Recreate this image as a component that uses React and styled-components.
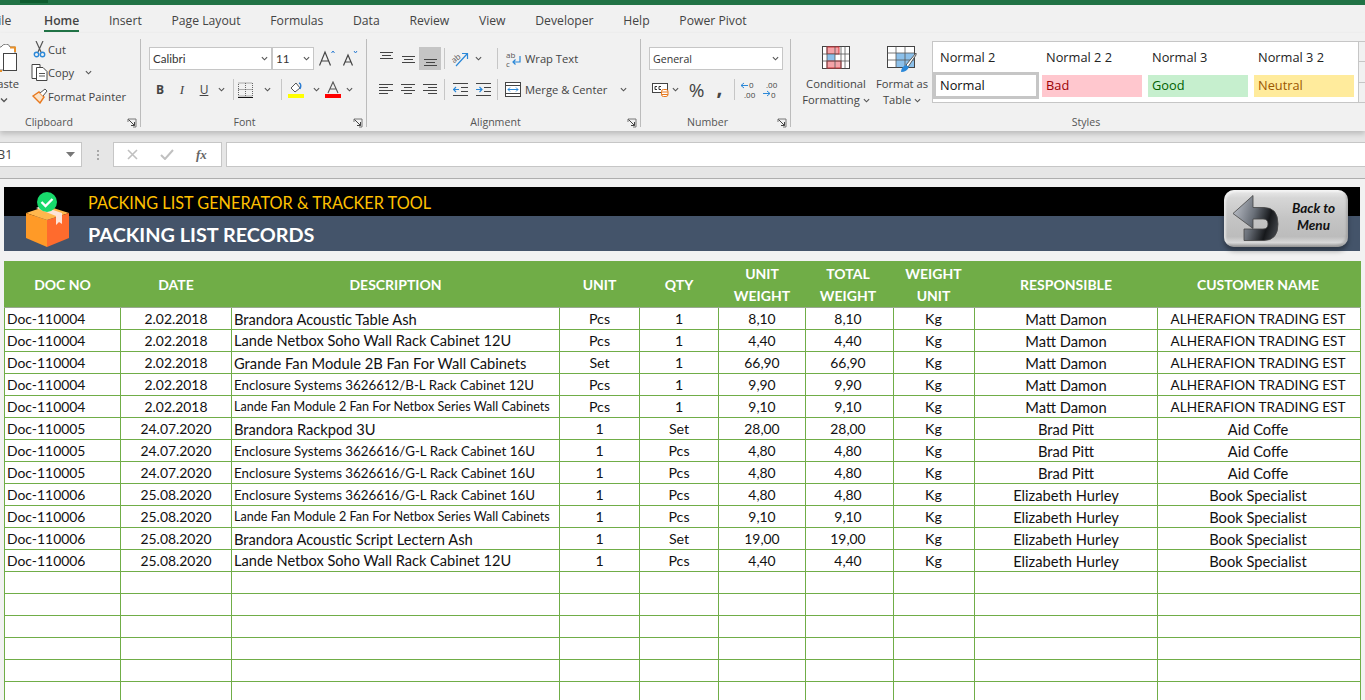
import React from 'react'
import styled, { createGlobalStyle } from 'styled-components'

const CALIBRI = `Lato, "Open Sans", sans-serif`
const SEGOE = `"Open Sans", "Noto Sans", sans-serif`

const GlobalStyle = createGlobalStyle`
  html, body { margin: 0; padding: 0; background: #f2f2f2; }
  #root { width: 1365px; height: 700px; overflow: hidden; }
  * { box-sizing: border-box; }
`

const Page = styled.div`
  width: 1365px;
  height: 700px;
  overflow: hidden;
  background: #f2f2f2;
  font-family: ${SEGOE};
  color: #444;
`

const TitleBar = styled.div`
  height: 5px;
  background: #217346;
  position: relative;
`

const TitleTab = styled.div`
  position: absolute;
  left: 20px;
  top: 0;
  width: 28px;
  height: 3px;
  background: #0e5c2f;
`

const TabRow = styled.div`
  height: 28px;
  background: #f1f1f1;
  display: flex;
  gap: 29.7px;
  margin-left: -8px;
  align-items: flex-start;
  font-size: 12.2px;
  padding-top: 7px;
`

const Tab = styled.div`
  color: #444;
  font-weight: ${p => (p.$active ? 600 : 400)};
  height: 20px;
  line-height: 17px;
  white-space: nowrap;
  margin-left: ${p => (p.$active ? 3 : 0)}px;
  border-bottom: ${p => (p.$active ? '2px solid #217346' : '0')};
`

const Ribbon = styled.div`
  height: 98px;
  background: #f1f1f1;
  display: flex;
  box-shadow: 0 3px 5px rgba(0,0,0,0.18);
  position: relative;
  overflow: hidden;
`

const Group = styled.div`
  width: ${p => p.$w}px;
  flex: ${p => (p.$grow ? 1 : 'none')};
  height: 88px;
  margin-top: 6px;
  padding: 0 0 0 ${p => p.$pad || 0}px;
  position: relative;
  display: flex;
  flex-direction: column;
  border-right: ${p => (p.$grow ? '0' : '1.5px solid #bcbcbc')};
`

const GroupBody = styled.div`
  flex: 1;
  display: flex;
  flex-direction: column;
  min-height: 0;
`

const GroupLabel = styled.div`
  height: 19px;
  line-height: 28px;
  font-size: 10.6px;
  text-align: center;
  color: #555;
  padding-right: ${p => p.$shift || 0}px;
  padding-left: ${p => p.$lead || 0}px;
`

const Launcher = styled.svg`
  position: absolute;
  right: 3px;
  bottom: -1px;
  width: 10px;
  height: 10px;
`

const Row = styled.div`
  display: flex;
  align-items: center;
  height: ${p => p.$h || 23}px;
  margin-top: ${p => p.$mt || 0}px;
  gap: ${p => p.$gap || 0}px;
`

const ClipColumn = styled.div`
  display: flex;
  height: 100%;
`

const PasteButton = styled.div`
  width: 21px;
  margin-right: 10px;
  flex: none;
  display: flex;
  flex-direction: column;
  align-items: flex-end;
  padding-top: 5px;
  font-size: 11.2px;
`

const PasteText = styled.span`
  display: block;
  line-height: 14px;
  margin-top: 5px;
  padding-right: 2px;
`

const PasteArrow = styled.span`
  display: flex;
  margin: 5px 13px 0 0;
`

const ClipList = styled.div`
  display: flex;
  flex-direction: column;
  margin-top: -1px;
`

const ClipItem = styled.div`
  height: 24px;
  display: flex;
  align-items: center;
  font-size: 11.2px;
  white-space: nowrap;
  color: #444;
`

const IconSlot = styled.span`
  width: ${p => p.$w}px;
  flex: none;
  display: flex;
  align-items: center;
  justify-content: center;
  height: 100%;
  background: ${p => (p.$active ? '#c5c5c5' : 'transparent')};
  font-family: ${p => (p.$serif ? '"Liberation Serif", serif' : SEGOE)};
`

const Select = styled.div`
  width: ${p => p.$w}px;
  height: 23px;
  background: #fff;
  border: 1px solid #c6c6c6;
  display: flex;
  align-items: center;
  justify-content: space-between;
  padding: 0 3px;
  font-family: ${p => (p.$calibri ? CALIBRI : SEGOE)};
  font-size: ${p => (p.$calibri ? 11.6 : 10.6)}px;
  color: #333;
`

const Divider = styled.span`
  width: 1px;
  height: 21px;
  flex: none;
  background: #c6c6c6;
  margin: 0 ${p => p.$r || 0}px 0 ${p => p.$l || 0}px;
`

const TextLabel = styled.span`
  font-size: 11.2px;
  color: #444;
  white-space: nowrap;
  margin-left: ${p => p.$ml || 0}px;
`

const BigButton = styled.div`
  width: ${p => p.$w}px;
  margin-left: ${p => p.$ml || 0}px;
  flex: none;
  display: flex;
  flex-direction: column;
  align-items: center;
  font-size: 11.2px;
  line-height: 16px;
  text-align: center;
  padding-top: 7px;
  color: #444;
`

const BigLabel = styled.div`
  margin-top: ${p => p.$mt}px;
  white-space: nowrap;
`

const StylesBody = styled.div`
  flex: 1;
  display: flex;
  align-items: flex-start;
  min-height: 0;
`

const Gallery = styled.div`
  width: 427px;
  height: 62px;
  margin: 2px 0 0 3px;
  background: #fff;
  border: 1px solid #c6c6c6;
  display: grid;
  grid-template-columns: repeat(4, 106px);
  grid-template-rows: 30px 31px;
`

const StyleName = styled.div`
  font-size: 12.8px;
  line-height: 30px;
  padding-left: 7px;
  color: #222;
  white-space: nowrap;
`

const StyleChip = styled.div`
  align-self: center;
  height: ${p => (p.$selected ? 27 : 22)}px;
  width: ${p => (p.$selected ? 106 : 100)}px;
  margin-left: ${p => p.$ml || 0}px;
  margin-top: -4px;
  background: ${p => p.$bg};
  color: ${p => p.$fg};
  border: ${p => (p.$selected ? '3px solid #c6c6c6' : '0')};
  font-size: 12.8px;
  line-height: 21px;
  padding-left: 4px;
`

const GalleryScroll = styled.div`
  width: 10px;
  height: 62px;
  margin-top: 2px;
  display: flex;
  flex-direction: column;
  flex: none;
`

const ScrollCell = styled.div`
  flex: 1;
  border: 1px solid #c6c6c6;
  border-left: 0;
  border-top: ${p => (p.$first ? '1px solid #c6c6c6' : '0')};
  background: #f1f1f1;
`

const FormulaBar = styled.div`
  height: 48px;
  background: #e6e6e6;
  border-bottom: 1px solid #aeaeae;
  padding-top: 11px;
  display: flex;
  align-items: flex-start;
`

const NameBox = styled.div`
  width: 83px;
  height: 25px;
  margin-left: -1px;
  background: #fff;
  border: 1px solid #c6c6c6;
  display: flex;
  align-items: center;
  justify-content: space-between;
  padding: 0 6px 0 0;
  font-size: 12.6px;
  color: #444;
`

const NameText = styled.span`
  margin-left: -3px;
`

const Grip = styled.div`
  width: 31px;
  height: 25px;
  display: flex;
  flex-direction: column;
  align-items: center;
  justify-content: center;
  gap: 2px;
`

const GripDot = styled.span`
  width: 2px;
  height: 2px;
  background: #a8a8a8;
`

const FormulaButtons = styled.div`
  width: 109px;
  height: 25px;
  background: #fff;
  border: 1px solid #c6c6c6;
  display: flex;
  align-items: center;
  padding-left: 13px;
  gap: 22px;
  flex: none;
`

const FxLabel = styled.span`
  font-family: "Liberation Serif", serif;
  font-style: italic;
  font-weight: 700;
  font-size: 13px;
  color: #666;
  width: 15px;
`

const FormulaInput = styled.div`
  flex: 1;
  height: 25px;
  margin-left: 4px;
  background: #fff;
  border: 1px solid #c6c6c6;
  border-right: 0;
`

const Sheet = styled.div`
  padding: 8px 5px 0 4px;
  background: #f2f2f2;
`

const Banner = styled.div`
  position: relative;
  height: 64px;
  display: flex;
  flex-direction: column;
  font-family: ${CALIBRI};
`

const BannerTop = styled.div`
  height: 29px;
  background: #000;
  color: #ffc000;
  padding-left: 84px;
  font-size: 16.27px;
  line-height: 32px;
  white-space: nowrap;
`

const BannerBottom = styled.div`
  height: 35px;
  background: #44546a;
  color: #fff;
  padding-left: 84px;
  font-size: 19.85px;
  font-weight: 700;
  line-height: 37px;
  white-space: nowrap;
`

const LogoWrap = styled.svg`
  position: absolute;
  left: 21px;
  top: 5px;
  width: 46px;
  height: 56px;
`

const BackButton = styled.div`
  position: absolute;
  right: 12px;
  top: 3px;
  width: 124px;
  height: 57px;
  border-radius: 10px;
  background: linear-gradient(180deg, #ececec 0%, #d6d6d6 14%, #c4c4c4 50%, #bcbcbc 82%, #d8d8d8 92%, #a4a4a4 100%);
  box-shadow: inset 2px 2px 2px rgba(255,255,255,0.5), inset -2px -2px 2px rgba(120,120,120,0.35), 0 4px 5px rgba(0,0,0,0.35);
  display: flex;
  align-items: center;
  color: #111;
`

const BackArrow = styled.svg`
  width: 50px;
  height: 50px;
  margin-left: 8px;
  flex: none;
`

const BackText = styled.div`
  flex: 1;
  text-align: center;
  font-family: ${CALIBRI};
  font-style: italic;
  font-weight: 700;
  font-size: 13.6px;
  line-height: 17px;
  padding: 0 3px 3px 0;
`

const Table = styled.table`
  margin-top: 10px;
  width: 1356px;
  border-collapse: collapse;
  table-layout: fixed;
  font-family: ${CALIBRI};
  background: #fff;
  color: #111;
`

const HeadCell = styled.th`
  height: 46px;
  background: #70ad47;
  color: #fff;
  font-weight: 700;
  font-size: 14px;
  line-height: 21.5px;
  text-align: center;
  padding: 2px ${p => p.$pr || 0}px 0 0;
  border: 1px solid #70ad47;
  border-top: 0;
  border-bottom: 1px solid #9aa892;
`

const Cell = styled.td`
  height: 22px;
  padding: 1px ${p => p.$pr || 0}px 0 ${p => (p.$left ? 2 : 0)}px;
  border: 1px solid #70ad47;
  text-align: ${p => (p.$left ? 'left' : 'center')};
  font-size: ${p => p.$size || 13.9}px;
  line-height: 20px;
  white-space: nowrap;
  overflow: hidden;
`

const Chevron = ({ x = 0, size = 7, color = '#555' }) => (
  <svg width={size} height={size} viewBox='0 0 8 8' style={{ marginLeft: x, flex: 'none' }}>
    <path d='M1 2.5 L4 5.5 L7 2.5' fill='none' stroke={color} strokeWidth='1.3' />
  </svg>
)

const PasteIcon = () => (
  <svg width='26' height='28' viewBox='0 0 26 28' style={{ flex: 'none' }}>
    <path d='M0 3 H6 Q8 0 11 0 Q14 0 15 3 H20 V26 H0 Z' fill='#fff' stroke='#777' strokeWidth='1' />
    <path d='M0 27 H7 M15 3.5 H20 V8' fill='none' stroke='#e8912b' strokeWidth='2' />
    <rect x='8.5' y='9.5' width='13' height='17' fill='#fff' stroke='#444' />
  </svg>
)

const CutIcon = () => (
  <svg width='13' height='17' viewBox='0 0 13 17'>
    <path d='M3 0 L8 11 M10 0 L5 11' stroke='#555' strokeWidth='1.2' fill='none' />
    <circle cx='3.5' cy='13.5' r='2.2' fill='none' stroke='#2b88d8' strokeWidth='1.4' />
    <circle cx='9.5' cy='13.5' r='2.2' fill='none' stroke='#2b88d8' strokeWidth='1.4' />
  </svg>
)

const CopyIcon = () => (
  <svg width='17' height='17' viewBox='0 0 17 17'>
    <path d='M6 14.5 H1 V0.5 H9 V3' fill='#fff' stroke='#444' />
    <path d='M5.5 3.5 H12 L16 7.5 V16.5 H5.5 Z' fill='#fff' stroke='#444' />
    <path d='M8 9.5 H14 M8 12 H14' stroke='#555' />
  </svg>
)

const PainterIcon = () => (
  <svg width='16' height='16' viewBox='0 0 16 16'>
    <path d='M1 8 L7 4 L12 9 L8 15 Z' fill='#fbe3c8' stroke='#e8791e' strokeWidth='1.4' />
    <path d='M8 5 L13 1 L15 3 L11 8' fill='#fff' stroke='#555' />
  </svg>
)

const LauncherIcon = () => (
  <Launcher viewBox='0 0 10 10'>
    <path d='M1 4 V1 H9 V9 H6' fill='none' stroke='#777' />
    <path d='M1.5 1.5 L7.5 7.5 M7.5 4 V7.5 H4' fill='none' stroke='#444' />
  </Launcher>
)

const AlignIcon = ({ lines }) => (
  <svg width='15' height='15' viewBox='0 0 15 15'>
    {lines.map(([x1, x2, y]) => (
      <path key={`${x1}${y}`} d={`M${x1} ${y}.5 H${x2}`} stroke='#444' strokeWidth='1' />
    ))}
  </svg>
)

const GrowFont = ({ up }) => (
  <svg width='17' height='17' viewBox='0 0 17 17'>
    <path d={up ? 'M12.5 3 L14 1 L15.5 3' : 'M12 1 L13.5 3 L15 1'} fill='none' stroke='#2b7cd3' strokeWidth='1' />
    <path d={up ? 'M0.5 15.5 L6 2 L11.5 15.5 M2.5 11 H9.5' : 'M1.5 15.5 L6 5 L10.5 15.5 M3 12 H9'} fill='none' stroke='#444' strokeWidth='1.2' />
  </svg>
)

const BorderIcon = () => (
  <svg width='15' height='16' viewBox='0 0 15 16'>
    <path d='M0.5 1 H14.5 V14 H0.5 Z M7.5 1 V14 M0.5 7.5 H14.5' fill='none' stroke='#666' strokeDasharray='1 1' />
    <path d='M0 15.5 H15' stroke='#111' strokeWidth='1' />
  </svg>
)

const FillIcon = () => (
  <svg width='16' height='17' viewBox='0 0 16 17'>
    <path d='M3 7 L8 2 L12 7 L7 11 Z' fill='#fff' stroke='#555' />
    <path d='M12 8 Q14 3 11 2' fill='none' stroke='#2b7cd3' strokeWidth='1.4' />
    <rect y='13' width='16' height='4' fill='#ffff00' />
  </svg>
)

const ColorIcon = () => (
  <svg width='16' height='17' viewBox='0 0 16 17'>
    <path d='M3 12 L8 1 L13 12 M5 8 H11' fill='none' stroke='#555' strokeWidth='1.1' />
    <rect y='13' width='16' height='4' fill='#f00' />
  </svg>
)

const OrientIcon = () => (
  <svg width='18' height='18' viewBox='0 0 18 18' style={{ overflow: 'visible' }}>
    <path d='M5 16 L16 4 M11 3.5 H16.5 V9' fill='none' stroke='#2b88d8' strokeWidth='1.2' />
    <text x='0' y='11' fontSize='8' fill='#555' transform='rotate(-40 5 8)' fontFamily={SEGOE}>ab</text>
  </svg>
)

const IndentIcon = ({ rev }) => (
  <svg width='15' height='13' viewBox='0 0 15 13'>
    <path d='M0 0.5 H15 M0 12.5 H15' stroke='#444' />
    <path d='M8 4.5 H15 M8 8.5 H15' stroke='#444' />
    <path d={rev ? 'M0 6.5 H6 M3 4 L0.5 6.5 L3 9' : 'M0 6.5 H6 M3.5 4 L6 6.5 L3.5 9'} fill='none' stroke='#2b88d8' strokeWidth='1.2' />
  </svg>
)

const WrapIcon = () => (
  <svg width='15' height='18' viewBox='0 0 15 18' style={{ overflow: 'visible' }}>
    <text x='0' y='7.5' fontSize='8' fill='#555' fontFamily={SEGOE}>ab</text>
    <text x='0' y='16.5' fontSize='8' fill='#555' fontFamily={SEGOE}>c</text>
    <path d='M14 6 V12 H7 M9.5 9.5 L7 12 L9.5 14.5' fill='none' stroke='#2b88d8' strokeWidth='1.2' />
  </svg>
)

const MergeIcon = () => (
  <svg width='16' height='15' viewBox='0 0 16 15'>
    <rect x='0.5' y='0.5' width='15' height='14' fill='#fff' stroke='#444' />
    <path d='M0.5 3.5 H15.5 M0.5 11.5 H15.5' stroke='#444' />
    <path d='M3 7.5 H13 M5 5.5 L3 7.5 L5 9.5 M11 5.5 L13 7.5 L11 9.5' fill='none' stroke='#2b88d8' />
  </svg>
)

const CurrencyIcon = () => (
  <svg width='17' height='15' viewBox='0 0 17 15'>
    <rect x='0.5' y='1.5' width='15' height='9' fill='#fff' stroke='#444' />
    <path d='M3 4.5 H5 M3 4.5 V7.5 H5 M7 4.5 H9 M7 4.5 V7.5 H9' fill='none' stroke='#333' />
    <rect x='9.5' y='7.5' width='6.5' height='7' rx='2' fill='#fff' stroke='#e8791e' />
    <path d='M9.5 10 H16 M9.5 12.5 H16' stroke='#e8791e' />
  </svg>
)

const DecimalIcon = ({ more }) => (
  <svg width='17' height='18' viewBox='0 0 17 18' style={{ overflow: 'visible' }}>
    <text x={more ? 3 : 8} y='7' fontSize='8' fill='#444' fontFamily={SEGOE}>{more ? '.00' : '0'}</text>
    <text x={more ? 8 : 3} y='17' fontSize='8' fill='#444' fontFamily={SEGOE}>{more ? '0' : '.00'}</text>
    <path d={more ? 'M0 12.5 H7 M4 10 L7 12.5 L4 15' : 'M0 4.5 H7 M3 2 L0 4.5 L3 7'} fill='none' stroke='#2b88d8' />
  </svg>
)

const CondFormatIcon = () => (
  <svg width='28' height='23' viewBox='0 0 28 23'>
    <rect x='0.5' y='0.5' width='27' height='22' fill='#fff' stroke='#444' />
    <rect x='5' y='1' width='12' height='7' fill='#f4a3a8' stroke='#d13438' />
    <rect x='5' y='8' width='8' height='7' fill='#8cc0ea' />
    <rect x='5' y='15' width='14' height='7' fill='#f4a3a8' stroke='#d13438' />
    <path d='M5 0.5 V22.5 M13 0.5 V22.5 M19 0.5 V22.5 M23 0.5 V22.5 M0.5 8 H27.5 M0.5 15 H27.5' stroke='#555' strokeWidth='0.8' />
  </svg>
)

const TableFormatIcon = () => (
  <svg width='30' height='27' viewBox='0 0 30 27'>
    <rect x='0.5' y='0.5' width='27' height='21' fill='#fff' stroke='#444' />
    <rect x='9' y='7' width='18' height='14' fill='#8cc0ea' />
    <path d='M0.5 7 H27.5 M0.5 14 H27.5 M9 0.5 V21.5 M18 0.5 V21.5' stroke='#555' strokeWidth='0.8' />
    <path d='M29 7 L19 19 L21 21 L29 9 Z' fill='#fff' stroke='#555' />
    <path d='M19 19 Q14 21 14 26 Q20 26 22 21 Z' fill='#2b88d8' />
  </svg>
)

const XIcon = () => (
  <svg width='11' height='11' viewBox='0 0 11 11'>
    <path d='M1 1 L10 10 M10 1 L1 10' stroke='#c0c0c0' strokeWidth='1.6' />
  </svg>
)

const CheckIcon = () => (
  <svg width='14' height='11' viewBox='0 0 14 11'>
    <path d='M1 6 L5 10 L13 1' fill='none' stroke='#c0c0c0' strokeWidth='2' />
  </svg>
)

const Logo = () => (
  <LogoWrap viewBox='0 0 46 56'>
    <path d='M1 21 L22 14 L44 21 L22 28 Z' fill='#ffb74d' />
    <path d='M1 21 L22 28 V55 L1 46 Z' fill='#ff9a27' />
    <path d='M22 28 L44 21 V46 L22 55 Z' fill='#ff6b2d' />
    <path d='M11 16 L16 14 L37 21 V32 L34 30 L31 33 V24 Z' fill='#fde3d8' />
    <circle cx='22' cy='10' r='10' fill='#18d96b' />
    <path d='M16.5 10 L20.5 14 L27.5 7' fill='none' stroke='#fff' strokeWidth='2.4' />
  </LogoWrap>
)

const Arrow = () => (
  <BackArrow viewBox='0 0 50 50'>
    <defs>
      <linearGradient id='arrowFill' x1='0' y1='0.3' x2='1' y2='0.6'>
        <stop offset='0' stopColor='#b9bdc5' />
        <stop offset='0.45' stopColor='#6a7079' />
        <stop offset='0.8' stopColor='#16181b' />
        <stop offset='1' stopColor='#3a3d42' />
      </linearGradient>
    </defs>
    <path d='M1 19.5 L21 1.5 V13.5 H32 Q46 13.5 46 30 Q46 46.5 32 46.5 H12 V35 H31 Q36 35 36 30 Q36 25 31 25 H21 V34.5 Z' fill='url(#arrowFill)' stroke='#444' strokeWidth='0.8' />
  </BackArrow>
)

const columns = [116, 111, 328, 80, 79, 87, 88, 81, 183, 203]

const headers = ['DOC NO', 'DATE', 'DESCRIPTION', 'UNIT', 'QTY', ['UNIT', 'WEIGHT'], ['TOTAL', 'WEIGHT'], ['WEIGHT', 'UNIT'], 'RESPONSIBLE', 'CUSTOMER NAME']
const headerPad = { 6: 3, 7: 1, 9: 2 }

const ALH = 'ALHERAFION TRADING EST'
const records = [
  ['Doc-110004', '2.02.2018', 'Brandora Acoustic Table Ash', 14.7, 'Pcs', '1', '8,10', '8,10', 'Matt Damon', ALH],
  ['Doc-110004', '2.02.2018', 'Lande Netbox Soho Wall Rack Cabinet 12U', 14.6, 'Pcs', '1', '4,40', '4,40', 'Matt Damon', ALH],
  ['Doc-110004', '2.02.2018', 'Grande Fan Module 2B Fan For Wall Cabinets', 14.7, 'Set', '1', '66,90', '66,90', 'Matt Damon', ALH],
  ['Doc-110004', '2.02.2018', 'Enclosure Systems 3626612/B-L Rack Cabinet 12U', 13.3, 'Pcs', '1', '9,90', '9,90', 'Matt Damon', ALH],
  ['Doc-110004', '2.02.2018', 'Lande Fan Module 2 Fan For Netbox Series Wall Cabinets', 12.6, 'Pcs', '1', '9,10', '9,10', 'Matt Damon', ALH],
  ['Doc-110005', '24.07.2020', 'Brandora Rackpod 3U', 14.7, '1', 'Set', '28,00', '28,00', 'Brad Pitt', 'Aid Coffe'],
  ['Doc-110005', '24.07.2020', 'Enclosure Systems 3626616/G-L Rack Cabinet 16U', 13.3, '1', 'Pcs', '4,80', '4,80', 'Brad Pitt', 'Aid Coffe'],
  ['Doc-110005', '24.07.2020', 'Enclosure Systems 3626616/G-L Rack Cabinet 16U', 13.3, '1', 'Pcs', '4,80', '4,80', 'Brad Pitt', 'Aid Coffe'],
  ['Doc-110006', '25.08.2020', 'Enclosure Systems 3626616/G-L Rack Cabinet 16U', 13.3, '1', 'Pcs', '4,80', '4,80', 'Elizabeth Hurley', 'Book Specialist'],
  ['Doc-110006', '25.08.2020', 'Lande Fan Module 2 Fan For Netbox Series Wall Cabinets', 12.6, '1', 'Pcs', '9,10', '9,10', 'Elizabeth Hurley', 'Book Specialist'],
  ['Doc-110006', '25.08.2020', 'Brandora Acoustic Script Lectern Ash', 14.7, '1', 'Set', '19,00', '19,00', 'Elizabeth Hurley', 'Book Specialist'],
  ['Doc-110006', '25.08.2020', 'Lande Netbox Soho Wall Rack Cabinet 12U', 14.6, '1', 'Pcs', '4,40', '4,40', 'Elizabeth Hurley', 'Book Specialist']
]

const tabs = ['File', 'Home', 'Insert', 'Page Layout', 'Formulas', 'Data', 'Review', 'View', 'Developer', 'Help', 'Power Pivot']

const alignTop = [[[1, 14, 1], [3, 12, 4], [1, 14, 7]], [[1, 14, 5], [3, 12, 8], [1, 14, 11]], [[1, 14, 8], [3, 12, 11], [1, 14, 14]]]
const alignBottom = [[[0, 14, 2], [0, 9, 5], [0, 14, 8], [0, 9, 11]], [[0, 14, 2], [3, 11, 5], [0, 14, 8], [3, 11, 11]], [[0, 14, 2], [5, 14, 5], [0, 14, 8], [5, 14, 11]]]

const Clipboard = () => (
  <Group $w={141}>
    <GroupBody>
      <ClipColumn>
        <PasteButton>
          <PasteIcon />
          <PasteText>aste</PasteText>
          <PasteArrow><Chevron size={8} /></PasteArrow>
        </PasteButton>
        <ClipList>
          <ClipItem><IconSlot $w={17}><CutIcon /></IconSlot><TextLabel>Cut</TextLabel></ClipItem>
          <ClipItem><IconSlot $w={17}><CopyIcon /></IconSlot><TextLabel>Copy</TextLabel><Chevron x={11} /></ClipItem>
          <ClipItem><IconSlot $w={17}><PainterIcon /></IconSlot><TextLabel>Format Painter</TextLabel></ClipItem>
        </ClipList>
      </ClipColumn>
    </GroupBody>
    <GroupLabel $shift={42}>Clipboard</GroupLabel>
    <LauncherIcon />
  </Group>
)

const Font = () => (
  <Group $w={226} $pad={8}>
    <GroupBody>
      <Row $mt={8}>
        <Select $w={123} $calibri>Calibri<Chevron /></Select>
        <Select $w={42} $calibri>11<Chevron /></Select>
        <IconSlot $w={27}><GrowFont up /></IconSlot>
        <IconSlot $w={18}><GrowFont /></IconSlot>
      </Row>
      <Row $mt={8}>
        <IconSlot $w={22}><strong style={{ fontSize: 12 }}>B</strong></IconSlot>
        <IconSlot $w={22} $serif><em style={{ fontSize: 13 }}>I</em></IconSlot>
        <IconSlot $w={22}><span style={{ fontSize: 12, textDecoration: 'underline' }}>U</span></IconSlot>
        <Chevron x={3} />
        <Divider $l={8} />
        <IconSlot $w={22}><BorderIcon /></IconSlot>
        <Chevron x={8} />
        <Divider $l={10} $r={4} />
        <IconSlot $w={20}><FillIcon /></IconSlot>
        <Chevron x={7} />
        <IconSlot $w={24} style={{ marginLeft: 1 }}><ColorIcon /></IconSlot>
        <Chevron x={1} />
      </Row>
    </GroupBody>
    <GroupLabel $shift={26}>Font</GroupLabel>
    <LauncherIcon />
  </Group>
)

const Alignment = () => (
  <Group $w={274} $pad={8}>
    <GroupBody>
      <Row $mt={8}>
        {alignTop.map((lines, i) => (
          <IconSlot key={i} $w={22} $active={i === 2}><AlignIcon lines={lines} /></IconSlot>
        ))}
        <Divider $l={3} $r={2} />
        <IconSlot $w={26}><OrientIcon /></IconSlot>
        <Chevron x={2} />
        <Divider $l={15} $r={5} />
        <IconSlot $w={21}><WrapIcon /></IconSlot>
        <TextLabel $ml={1}>Wrap Text</TextLabel>
      </Row>
      <Row $mt={8}>
        {alignBottom.map((lines, i) => (
          <IconSlot key={i} $w={22}><AlignIcon lines={lines} /></IconSlot>
        ))}
        <Divider $l={3} $r={2} />
        <IconSlot $w={26}><IndentIcon rev /></IconSlot>
        <IconSlot $w={20}><IndentIcon /></IconSlot>
        <Divider $l={4} $r={4} />
        <IconSlot $w={21}><MergeIcon /></IconSlot>
        <TextLabel $ml={2}>Merge & Center</TextLabel>
        <Chevron x={13} />
      </Row>
    </GroupBody>
    <GroupLabel $shift={24}>Alignment</GroupLabel>
    <LauncherIcon />
  </Group>
)

const NumberGroup = () => (
  <Group $w={150} $pad={8}>
    <GroupBody>
      <Row $mt={8}><Select $w={134}>General<Chevron /></Select></Row>
      <Row $mt={8}>
        <IconSlot $w={22}><CurrencyIcon /></IconSlot>
        <Chevron x={1} />
        <IconSlot $w={27} style={{ fontSize: 19, marginLeft: 4 }}>%</IconSlot>
        <IconSlot $w={19} style={{ fontSize: 21, fontWeight: 700, paddingBottom: 6 }}>,</IconSlot>
        <Divider $l={5} $r={4} />
        <IconSlot $w={20}><DecimalIcon /></IconSlot>
        <IconSlot $w={20} style={{ marginLeft: 2 }}><DecimalIcon more /></IconSlot>
      </Row>
    </GroupBody>
    <GroupLabel $shift={24}>Number</GroupLabel>
    <LauncherIcon />
  </Group>
)

const chips = [
  { name: 'Normal 2', label: 'Normal', bg: '#fff', fg: '#111', selected: true },
  { name: 'Normal 2 2', label: 'Bad', bg: '#ffc7ce', fg: '#9c0006', ml: 3 },
  { name: 'Normal 3', label: 'Good', bg: '#c6efce', fg: '#006100', ml: 3 },
  { name: 'Normal 3 2', label: 'Neutral', bg: '#ffeb9c', fg: '#9c5700', ml: 3 }
]

const Styles = () => (
  <Group $grow>
    <StylesBody>
      <BigButton $w={78} $ml={6}>
        <CondFormatIcon />
        <BigLabel $mt={7}>Conditional<br />Formatting <Chevron /></BigLabel>
      </BigButton>
      <BigButton $w={54}>
        <TableFormatIcon />
        <BigLabel $mt={3}>Format as<br />Table <Chevron /></BigLabel>
      </BigButton>
      <Gallery>
        {chips.map(c => <StyleName key={c.name}>{c.name}</StyleName>)}
        {chips.map(c => (
          <StyleChip key={c.label} $bg={c.bg} $fg={c.fg} $selected={c.selected} $ml={c.ml}>{c.label}</StyleChip>
        ))}
      </Gallery>
      <GalleryScroll>
        <ScrollCell $first />
        <ScrollCell />
        <ScrollCell />
      </GalleryScroll>
    </StylesBody>
    <GroupLabel $lead={12}>Styles</GroupLabel>
  </Group>
)

const HeaderLabel = ({ value }) => (Array.isArray(value)
  ? <>{value[0]}<br />{value[1]}</>
  : value)

const App = () => (
  <Page>
    <GlobalStyle />
    <TitleBar><TitleTab /></TitleBar>
    <TabRow>
      {tabs.map(t => <Tab key={t} $active={t === 'Home'}>{t}</Tab>)}
    </TabRow>
    <Ribbon>
      <Clipboard />
      <Font />
      <Alignment />
      <NumberGroup />
      <Styles />
    </Ribbon>
    <FormulaBar>
      <NameBox>
        <NameText>B1</NameText>
        <svg width='9' height='5' viewBox='0 0 9 5'><path d='M0 0 H9 L4.5 5 Z' fill='#777' /></svg>
      </NameBox>
      <Grip><GripDot /><GripDot /><GripDot /></Grip>
      <FormulaButtons>
        <XIcon />
        <CheckIcon />
        <FxLabel>fx</FxLabel>
      </FormulaButtons>
      <FormulaInput />
    </FormulaBar>
    <Sheet>
      <Banner>
        <BannerTop>PACKING LIST GENERATOR & TRACKER TOOL</BannerTop>
        <BannerBottom>PACKING LIST RECORDS</BannerBottom>
        <Logo />
        <BackButton>
          <Arrow />
          <BackText>Back to<br />Menu</BackText>
        </BackButton>
      </Banner>
      <Table>
        <colgroup>
          {columns.map((w, i) => <col key={i} style={{ width: w }} />)}
        </colgroup>
        <thead>
          <tr>
            {headers.map((h, i) => <HeadCell key={i} $pr={headerPad[i]}><HeaderLabel value={h} /></HeadCell>)}
          </tr>
        </thead>
        <tbody>
          {records.map((r, i) => (
            <tr key={i}>
              <Cell $left>{r[0]}</Cell>
              <Cell>{r[1]}</Cell>
              <Cell $left $size={r[3]}>{r[2]}</Cell>
              <Cell $size={14.2}>{r[4]}</Cell>
              <Cell $size={14.2}>{r[5]}</Cell>
              <Cell>{r[6]}</Cell>
              <Cell $pr={3}>{r[7]}</Cell>
              <Cell $size={14.2} $pr={1}>Kg</Cell>
              <Cell $size={14.7}>{r[8]}</Cell>
              <Cell $size={r[9] === ALH ? 13.6 : 14.7} $pr={2}>{r[9]}</Cell>
            </tr>
          ))}
          {Array.from({ length: 7 }).map((_, i) => (
            <tr key={`empty-${i}`}>
              {columns.map((w, j) => <Cell key={j} />)}
            </tr>
          ))}
        </tbody>
      </Table>
    </Sheet>
  </Page>
)

export default App
